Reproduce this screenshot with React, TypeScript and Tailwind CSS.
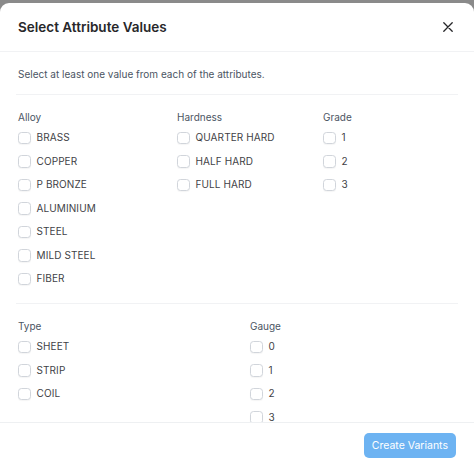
const sections = [
  {
    columns: [
      { label: "Alloy", width: "w-[159px]", values: ["BRASS", "COPPER", "P BRONZE", "ALUMINIUM", "STEEL", "MILD STEEL", "FIBER"] },
      { label: "Hardness", width: "w-[146px]", values: ["QUARTER HARD", "HALF HARD", "FULL HARD"] },
      { label: "Grade", width: "flex-1", values: ["1", "2", "3"] },
    ],
  },
  {
    columns: [
      { label: "Type", width: "w-[232px]", values: ["SHEET", "STRIP", "COIL"] },
      { label: "Gauge", width: "flex-1", values: ["0", "1", "2", "3"] },
    ],
  },
];

function Checkbox({ label }: { label: string }) {
  return (
    <label className="h-[23.5px] flex items-center gap-[6px] cursor-pointer">
      <span className="w-[12.5px] h-[12.5px] rounded-[3.5px] border border-[#d1d5db] bg-white shadow-[0_1px_1px_rgba(0,0,0,0.04)]" />
      <span className="text-[10px] text-[#3f3f46] tracking-[0.1px]">{label}</span>
    </label>
  );
}

export default function App() {
  return (
    <div className="w-[474px] h-[467px] overflow-hidden bg-[#8a8a8a] font-['Inter','Liberation_Sans',sans-serif]">
      <div className="mt-[3px] h-[472px] bg-white rounded-t-[9px] flex flex-col">
        {/* Header */}
        <div className="h-[49px] shrink-0 flex items-center justify-between pl-[18px] pr-[19px] border-b border-[#f1f2f4]">
          <h2 className="text-[13.5px] font-semibold text-[#27272a]">Select Attribute Values</h2>
          <button className="w-[14px] h-[14px] flex items-center justify-center text-[#27272a]" aria-label="Close">
            <svg width="10" height="10" viewBox="0 0 10 10" fill="none" stroke="currentColor" strokeWidth="1.3" strokeLinecap="round">
              <path d="M0.8 0.8l8.4 8.4M9.2 0.8l-8.4 8.4" />
            </svg>
          </button>
        </div>

        {/* Body */}
        <div className="h-[370px] shrink-0 overflow-hidden">
          <div className="px-[16px]">
            <p className="pt-[14px] pb-[12px] px-[2px] text-[10px] leading-[16px] text-[#4b5563] border-b border-[#f1f2f4]">
              Select at least one value from each of the attributes.
            </p>
            {sections.map((section, i) => (
              <div
                key={i}
                className={
                  i === 0
                    ? "flex px-[2px] pt-[16px] pb-[12.5px] border-b border-[#f1f2f4]"
                    : "flex px-[2px] pt-[16px] pb-[13px]"
                }
              >
                {section.columns.map((col) => (
                  <div key={col.label} className={col.width}>
                    <div className="h-[15px] leading-[13px] text-[10px] text-[#4b5563]">{col.label}</div>
                    <div className="flex flex-col">
                      {col.values.map((v) => (
                        <Checkbox key={v} label={v} />
                      ))}
                    </div>
                  </div>
                ))}
              </div>
            ))}
          </div>
        </div>

        {/* Footer */}
        <div className="flex-1 border-t border-[#eef0f2] flex justify-end pt-[10px] pr-[18px]">
          <button
            disabled
            className="h-[25px] px-[8px] rounded-[5px] bg-[#6db3f2] text-white text-[10.5px] leading-[25px]"
          >
            Create Variants
          </button>
        </div>
      </div>
    </div>
  );
}
